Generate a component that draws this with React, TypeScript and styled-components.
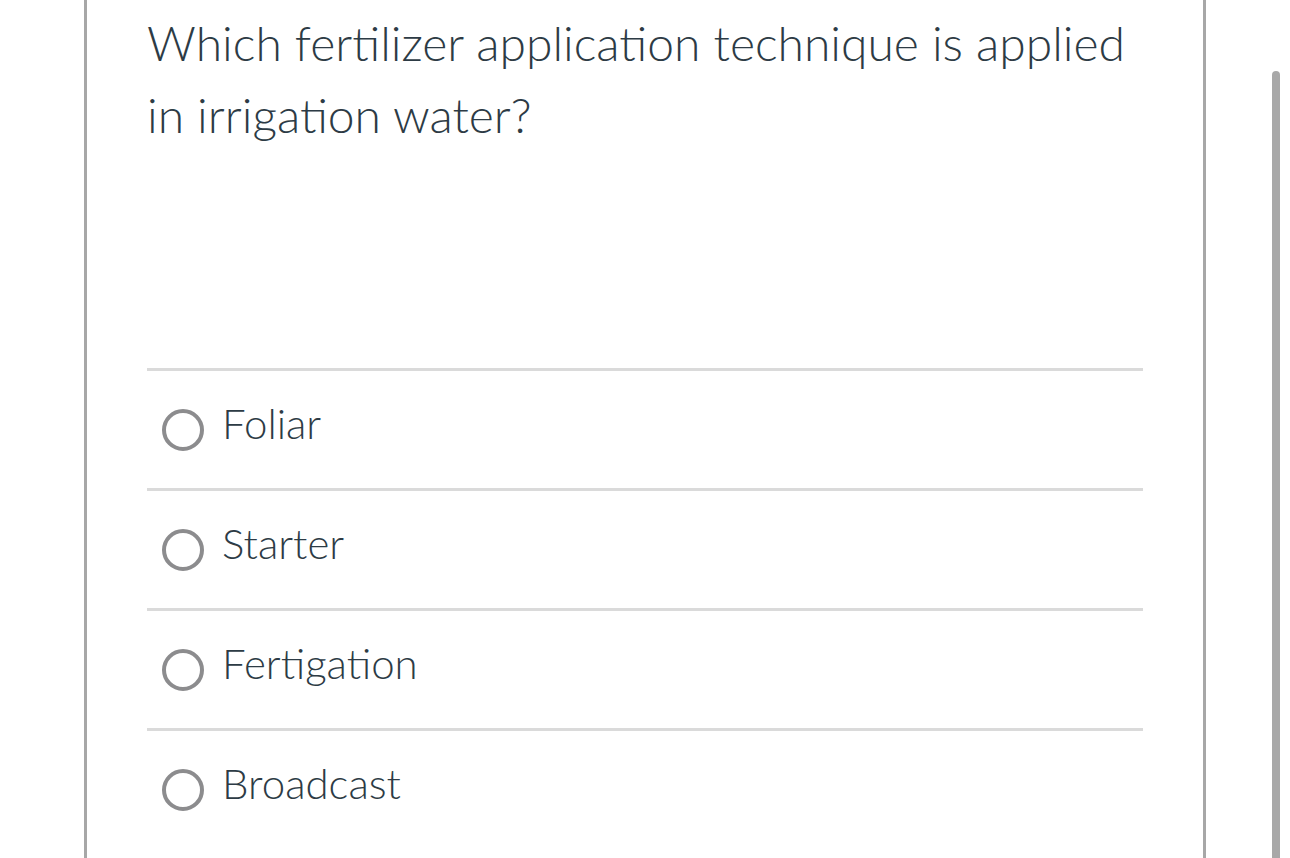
import styled, { createGlobalStyle } from 'styled-components';

const GlobalStyle = createGlobalStyle`
  html, body {
    margin: 0;
    padding: 0;
    background: #ffffff;
    overflow: hidden;
  }
  body {
    font-family: Lato, "Open Sans", "Liberation Sans", sans-serif;
    color: #2d3b45;
  }
`;

const Page = styled.div`
  display: flex;
  align-items: stretch;
  height: 858px;
  overflow: hidden;
`;

const Panel = styled.div`
  margin-left: 84px;
  width: 1122px;
  border-left: 3px solid #a7a7a7;
  border-right: 3px solid #a7a7a7;
  padding: 0 60px;
  box-sizing: border-box;
  flex-shrink: 0;
`;

const ScrollTrack = styled.div`
  margin-left: 66px;
  width: 8px;
  display: flex;
  flex-direction: column;
`;

const ScrollThumb = styled.div`
  margin-top: 71px;
  flex: 1;
  background: #a8a8a8;
  border-radius: 4px 4px 0 0;
`;

const Question = styled.div`
  height: 368px;
  padding-top: 7px;
  box-sizing: border-box;
  font-size: 48px;
  line-height: 72px;
  font-weight: 300;
  color: #2d3b45;
`;

const Answers = styled.ul`
  list-style: none;
  margin: 0;
  padding: 0;
`;

const AnswerRow = styled.li`
  display: flex;
  align-items: center;
  gap: 18px;
  height: 120px;
  box-sizing: border-box;
  border-top: 3px solid #dadada;
  padding: 0 0 0 15px;
`;

const Radio = styled.span`
  width: 42px;
  height: 42px;
  box-sizing: border-box;
  border: 4.5px solid #8c8c8e;
  border-radius: 50%;
  flex-shrink: 0;
`;

const AnswerLabel = styled.span`
  font-size: 42px;
  font-weight: 300;
  line-height: 1;
  color: #2d3b45;
  margin-bottom: 14px;
`;

const answers = ['Foliar', 'Starter', 'Fertigation', 'Broadcast'];

export default function App() {
  return (
    <>
      <GlobalStyle />
      <Page>
        <Panel>
          <Question>
            Which fertilizer application technique is applied in irrigation water?
          </Question>
          <Answers>
            {answers.map((a) => (
              <AnswerRow key={a}>
                <Radio />
                <AnswerLabel>{a}</AnswerLabel>
              </AnswerRow>
            ))}
          </Answers>
        </Panel>
        <ScrollTrack>
          <ScrollThumb />
        </ScrollTrack>
      </Page>
    </>
  );
}
